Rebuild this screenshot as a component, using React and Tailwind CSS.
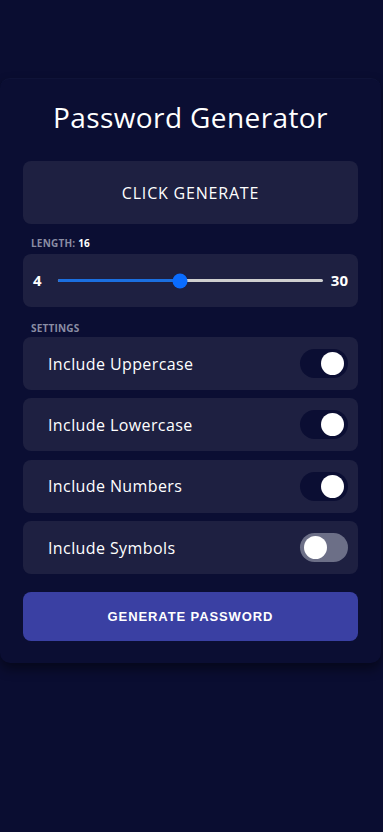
import React, { useState } from 'react';

const Toggle = ({ on, onClick }) => (
    <button
        onClick={onClick}
        className={`relative w-[48px] h-[29px] rounded-full flex items-center px-[4px] ${
            on ? 'bg-[#0b0e33] justify-end' : 'bg-[#6c6f87] justify-start'
        }`}
    >
        <span className="block w-[23px] h-[23px] rounded-full bg-white"></span>
    </button>
);

const App = () => {
    const [length] = useState(16);
    const [settings, setSettings] = useState({
        uppercase: true,
        lowercase: true,
        numbers: true,
        symbols: false,
    });

    const rows = [
        { key: 'uppercase', label: 'Include Uppercase' },
        { key: 'lowercase', label: 'Include Lowercase' },
        { key: 'numbers', label: 'Include Numbers' },
        { key: 'symbols', label: 'Include Symbols' },
    ];

    const pct = ((length - 4) / 26) * 100;

    return (
        <div
            className="min-h-screen bg-[#0a0d31] pt-[78px] text-white"
            style={{ fontFamily: '"Open Sans", "Noto Sans", sans-serif' }}
        >
            <div className="w-[381px] bg-[#0b0e33] rounded-[10px] border-t border-[#0f1338] shadow-[0_6px_12px_rgba(0,0,0,0.45)] px-[23px] pt-[20px] pb-[22px]">
                <h1 className="text-center text-[28px] font-medium leading-[36px] tracking-[0.4px] mb-[26px]">
                    Password Generator
                </h1>

                <div className="h-[63px] bg-[#1e2041] rounded-[8px] flex items-center justify-center text-[16px] font-medium tracking-[0.8px]">
                    CLICK GENERATE
                </div>

                <div className="mt-[12px] mb-[4px] px-[8px] text-[10px] font-bold leading-[14px] tracking-[0.2px] text-[#8a8da3]">
                    LENGTH: <span className="text-white">{length}</span>
                </div>
                <div className="h-[53px] bg-[#1e2041] rounded-[8px] flex items-center pl-[10px] pr-[10px]">
                    <span className="text-[15px] font-bold w-[11px]">4</span>
                    <div className="relative flex-1 h-[3px] bg-[#cfcfcf] rounded-full ml-[14px] mr-[8px]">
                        <div className="absolute left-0 top-0 h-[3px] bg-[#1b6fe0] rounded-full" style={{ width: `${pct}%` }}></div>
                        <div
                            className="absolute top-1/2 w-[15px] h-[15px] -translate-x-1/2 -translate-y-1/2 rounded-full bg-[#0a6cff]"
                            style={{ left: `${pct}%` }}
                        ></div>
                    </div>
                    <span className="text-[15px] font-bold">30</span>
                </div>

                <div className="mt-[14px] mb-[2px] px-[8px] text-[10px] font-bold leading-[14px] tracking-[0.2px] text-[#8a8da3]">
                    SETTINGS
                </div>
                <div className="flex flex-col gap-[8.4px]">
                    {rows.map(row => (
                        <div key={row.key} className="h-[53px] bg-[#1e2041] rounded-[8px] flex items-center justify-between pl-[25px] pr-[10px]">
                            <span className="text-[16px] font-medium tracking-[0.4px]">{row.label}</span>
                            <Toggle
                                on={settings[row.key]}
                                onClick={() => setSettings(s => ({ ...s, [row.key]: !s[row.key] }))}
                            />
                        </div>
                    ))}
                </div>

                <button
                    className="mt-[18px] w-full h-[49px] bg-[#3a40a3] rounded-[8px] text-[13px] font-bold tracking-[0.9px] text-white"
                    style={{ fontFamily: '"Liberation Sans", Arial, sans-serif' }}
                >
                    GENERATE PASSWORD
                </button>
            </div>
        </div>
    );
};

export default App;
